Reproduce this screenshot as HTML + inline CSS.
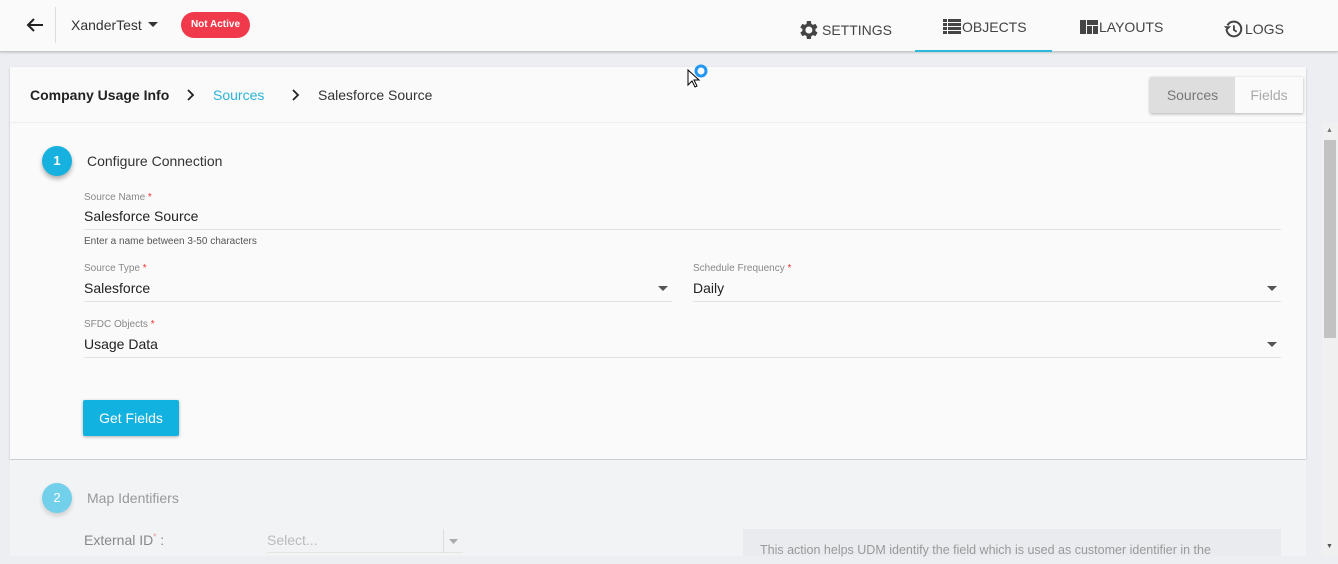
<!DOCTYPE html>
<html><head><style>
*{box-sizing:border-box;margin:0;padding:0}
body{width:1338px;height:564px;overflow:hidden;background:#eceef1;font-family:"Liberation Sans",sans-serif;position:relative;color:#222}
.a{position:absolute}
.hdr{left:0;top:0;width:1338px;height:52px;background:#fafafa;border-bottom:1px solid #c8c8c8;box-shadow:0 1px 2px rgba(0,0,0,.15)}
.tab{top:19px;font-size:14px;color:#444;display:flex;align-items:center;gap:1px}
.lbl{font-size:10px;color:#888}
.lbl b{color:#e33;font-weight:normal}
.val{font-size:14px;color:#222}
.line{height:1px;background:#e2e2e2}
</style></head><body>
<div class="a hdr"></div>
<svg class="a" style="left:25px;top:17px" width="20" height="16" viewBox="0 0 20 16"><path d="M18 8H3M9 2L3 8l6 6" stroke="#222" stroke-width="2" fill="none"/></svg>
<div class="a" style="left:55px;top:7px;width:1px;height:36px;background:#ddd"></div>
<div class="a" style="left:71px;top:17px;font-size:14px;color:#333">XanderTest</div>
<svg class="a" style="left:148px;top:22px" width="10" height="6"><path d="M0 0h10L5 5z" fill="#333"/></svg>
<div class="a" style="left:181px;top:12px;width:69px;height:26px;border-radius:13px;background:#f0394a;color:#fff;font-size:10px;font-weight:bold;text-align:center;line-height:26px">Not Active</div>
<div class="a tab" style="left:797px;top:18px"><svg width="24" height="24" viewBox="0 0 24 24"><path fill="#444" d="M19.4 13a7.5 7.5 0 000-2l2.1-1.6-2-3.5-2.5 1a7 7 0 00-1.7-1L14.9 3h-4l-.4 2.9a7 7 0 00-1.7 1l-2.5-1-2 3.5L6.4 11a7.5 7.5 0 000 2l-2.1 1.6 2 3.5 2.5-1a7 7 0 001.7 1l.4 2.9h4l.4-2.9a7 7 0 001.7-1l2.5 1 2-3.5zM12.9 15.5a3.5 3.5 0 110-7 3.5 3.5 0 010 7z" transform="translate(-1,0)"/></svg>SETTINGS</div>
<div class="a tab" style="left:943px"><svg width="18" height="16" viewBox="0 0 18 16"><path fill="#444" d="M0 1h4v3H0zM5 1h13v3H5zM0 5h4v3H0zM5 5h13v3H5zM0 9h4v3H0zM5 9h13v3H5zM0 13h4v3H0zM5 13h13v3H5z" transform="translate(0,-1)"/></svg>OBJECTS</div>
<div class="a" style="left:915px;top:50px;width:137px;height:2px;background:#2bb8db"></div>
<div class="a tab" style="left:1080px"><svg width="18" height="16" viewBox="0 0 18 16"><path fill="#444" d="M0 1h6v14H0zM7 1h11v5H7zM7 7h5v8H7zM13 7h5v8h-5z"/></svg>LAYOUTS</div>
<div class="a tab" style="left:1222px;top:18px"><svg width="22" height="22" viewBox="0 0 24 24"><path fill="none" stroke="#444" stroke-width="2.2" d="M5 12a8 8 0 108-8 8 8 0 00-7 4"/><path fill="#444" d="M2 9l4 4 4-4z"/><path fill="none" stroke="#444" stroke-width="2" d="M13 8v5l3 2"/></svg>LOGS</div>

<div class="a" style="left:10px;top:67px;width:1296px;height:392px;background:#fafafa;box-shadow:0 1px 2px rgba(0,0,0,.2)"></div>
<div class="a" style="left:30px;top:87px;font-size:14px;font-weight:bold;color:#222">Company Usage Info</div>
<svg class="a" style="left:186px;top:88px" width="10" height="14"><path d="M2 2l5 5-5 5" stroke="#222" stroke-width="1.8" fill="none"/></svg>
<div class="a" style="left:213px;top:87px;font-size:14px;color:#2bb3d9">Sources</div>
<svg class="a" style="left:291px;top:88px" width="10" height="14"><path d="M2 2l5 5-5 5" stroke="#222" stroke-width="1.8" fill="none"/></svg>
<div class="a" style="left:318px;top:87px;font-size:14px;color:#333">Salesforce Source</div>
<div class="a" style="left:1150px;top:77px;width:153px;height:36px;box-shadow:0 1px 3px rgba(0,0,0,.3);display:flex;font-size:14px">
<div style="width:85px;background:#dedede;color:#777;text-align:center;line-height:36px">Sources</div>
<div style="flex:1;background:#fafafa;color:#aaa;text-align:center;line-height:36px">Fields</div></div>
<div class="a" style="left:10px;top:122px;width:1296px;height:1px;background:#eee"></div>
<svg class="a" style="left:686px;top:64px" width="24" height="28"><circle cx="15" cy="7" r="5" fill="none" stroke="#2196f3" stroke-width="3"/><path d="M2 6v15l4-4 3 6 2-1-3-6h5z" fill="#fff" stroke="#000" stroke-width="1"/></svg>

<div class="a" style="left:1322px;top:122px;width:16px;height:434px;background:#f0f0f0"></div>
<div class="a" style="left:1324px;top:140px;width:12px;height:198px;background:#c2c2c2"></div>
<div class="a" style="left:1326px;top:127px;font-size:7px;color:#777">▲</div>
<div class="a" style="left:1326px;top:543px;font-size:7px;color:#555">▼</div>

<div class="a" style="left:42px;top:146px;width:30px;height:30px;border-radius:50%;background:#17b1df;color:#fff;font-size:13px;font-weight:bold;text-align:center;line-height:30px;box-shadow:0 3px 5px rgba(0,0,0,.3)">1</div>
<div class="a" style="left:87px;top:153px;font-size:14px;color:#333">Configure Connection</div>
<div class="a lbl" style="left:84px;top:192px">Source Name <b>*</b></div>
<div class="a val" style="left:84px;top:208px">Salesforce Source</div>
<div class="a line" style="left:84px;top:229px;width:1197px"></div>
<div class="a" style="left:84px;top:236px;font-size:10px;color:#555">Enter a name between 3-50 characters</div>
<div class="a lbl" style="left:84px;top:263px">Source Type <b>*</b></div>
<div class="a val" style="left:84px;top:280px">Salesforce</div>
<svg class="a" style="left:658px;top:286px" width="10" height="5"><path d="M0 0h10L5 5z" fill="#555"/></svg>
<div class="a line" style="left:84px;top:301px;width:588px"></div>
<div class="a lbl" style="left:693px;top:263px">Schedule Frequency <b>*</b></div>
<div class="a val" style="left:693px;top:280px">Daily</div>
<svg class="a" style="left:1267px;top:286px" width="10" height="5"><path d="M0 0h10L5 5z" fill="#555"/></svg>
<div class="a line" style="left:693px;top:301px;width:588px"></div>
<div class="a lbl" style="left:84px;top:319px">SFDC Objects <b>*</b></div>
<div class="a val" style="left:84px;top:336px">Usage Data</div>
<svg class="a" style="left:1267px;top:342px" width="10" height="5"><path d="M0 0h10L5 5z" fill="#555"/></svg>
<div class="a line" style="left:84px;top:357px;width:1197px"></div>
<div class="a" style="left:83px;top:400px;width:96px;height:36px;background:#12b2e0;color:#fff;font-size:14px;text-align:center;line-height:36px;border-radius:2px;box-shadow:0 1px 3px rgba(0,0,0,.3)">Get Fields</div>

<div class="a" style="left:10px;top:460px;width:1296px;height:96px;background:#f2f3f5"></div>
<div class="a" style="left:42px;top:483px;width:30px;height:30px;border-radius:50%;background:#73d0ea;color:#fff;font-size:13px;text-align:center;line-height:30px;box-shadow:0 3px 5px rgba(0,0,0,.15)">2</div>
<div class="a" style="left:87px;top:490px;font-size:14px;color:#999">Map Identifiers</div>
<div class="a" style="left:84px;top:532px;font-size:14px;color:#888">External ID<sup style="color:#e88;font-size:8px">*</sup> :</div>
<div class="a" style="left:267px;top:532px;font-size:14px;color:#bbb">Select...</div>
<div class="a" style="left:267px;top:552px;width:196px;height:1px;background:#e4e4e4"></div>
<div class="a" style="left:443px;top:529px;width:1px;height:24px;background:#ddd"></div>
<svg class="a" style="left:449px;top:539px" width="9" height="5"><path d="M0 0h9L4.5 5z" fill="#aaa"/></svg>
<div class="a" style="left:743px;top:529px;width:538px;height:27px;background:#e9ebee"></div>
<div class="a" style="left:760px;top:543px;font-size:12.5px;color:#999">This action helps UDM identify the field which is used as customer identifier in the</div>
</body></html>
